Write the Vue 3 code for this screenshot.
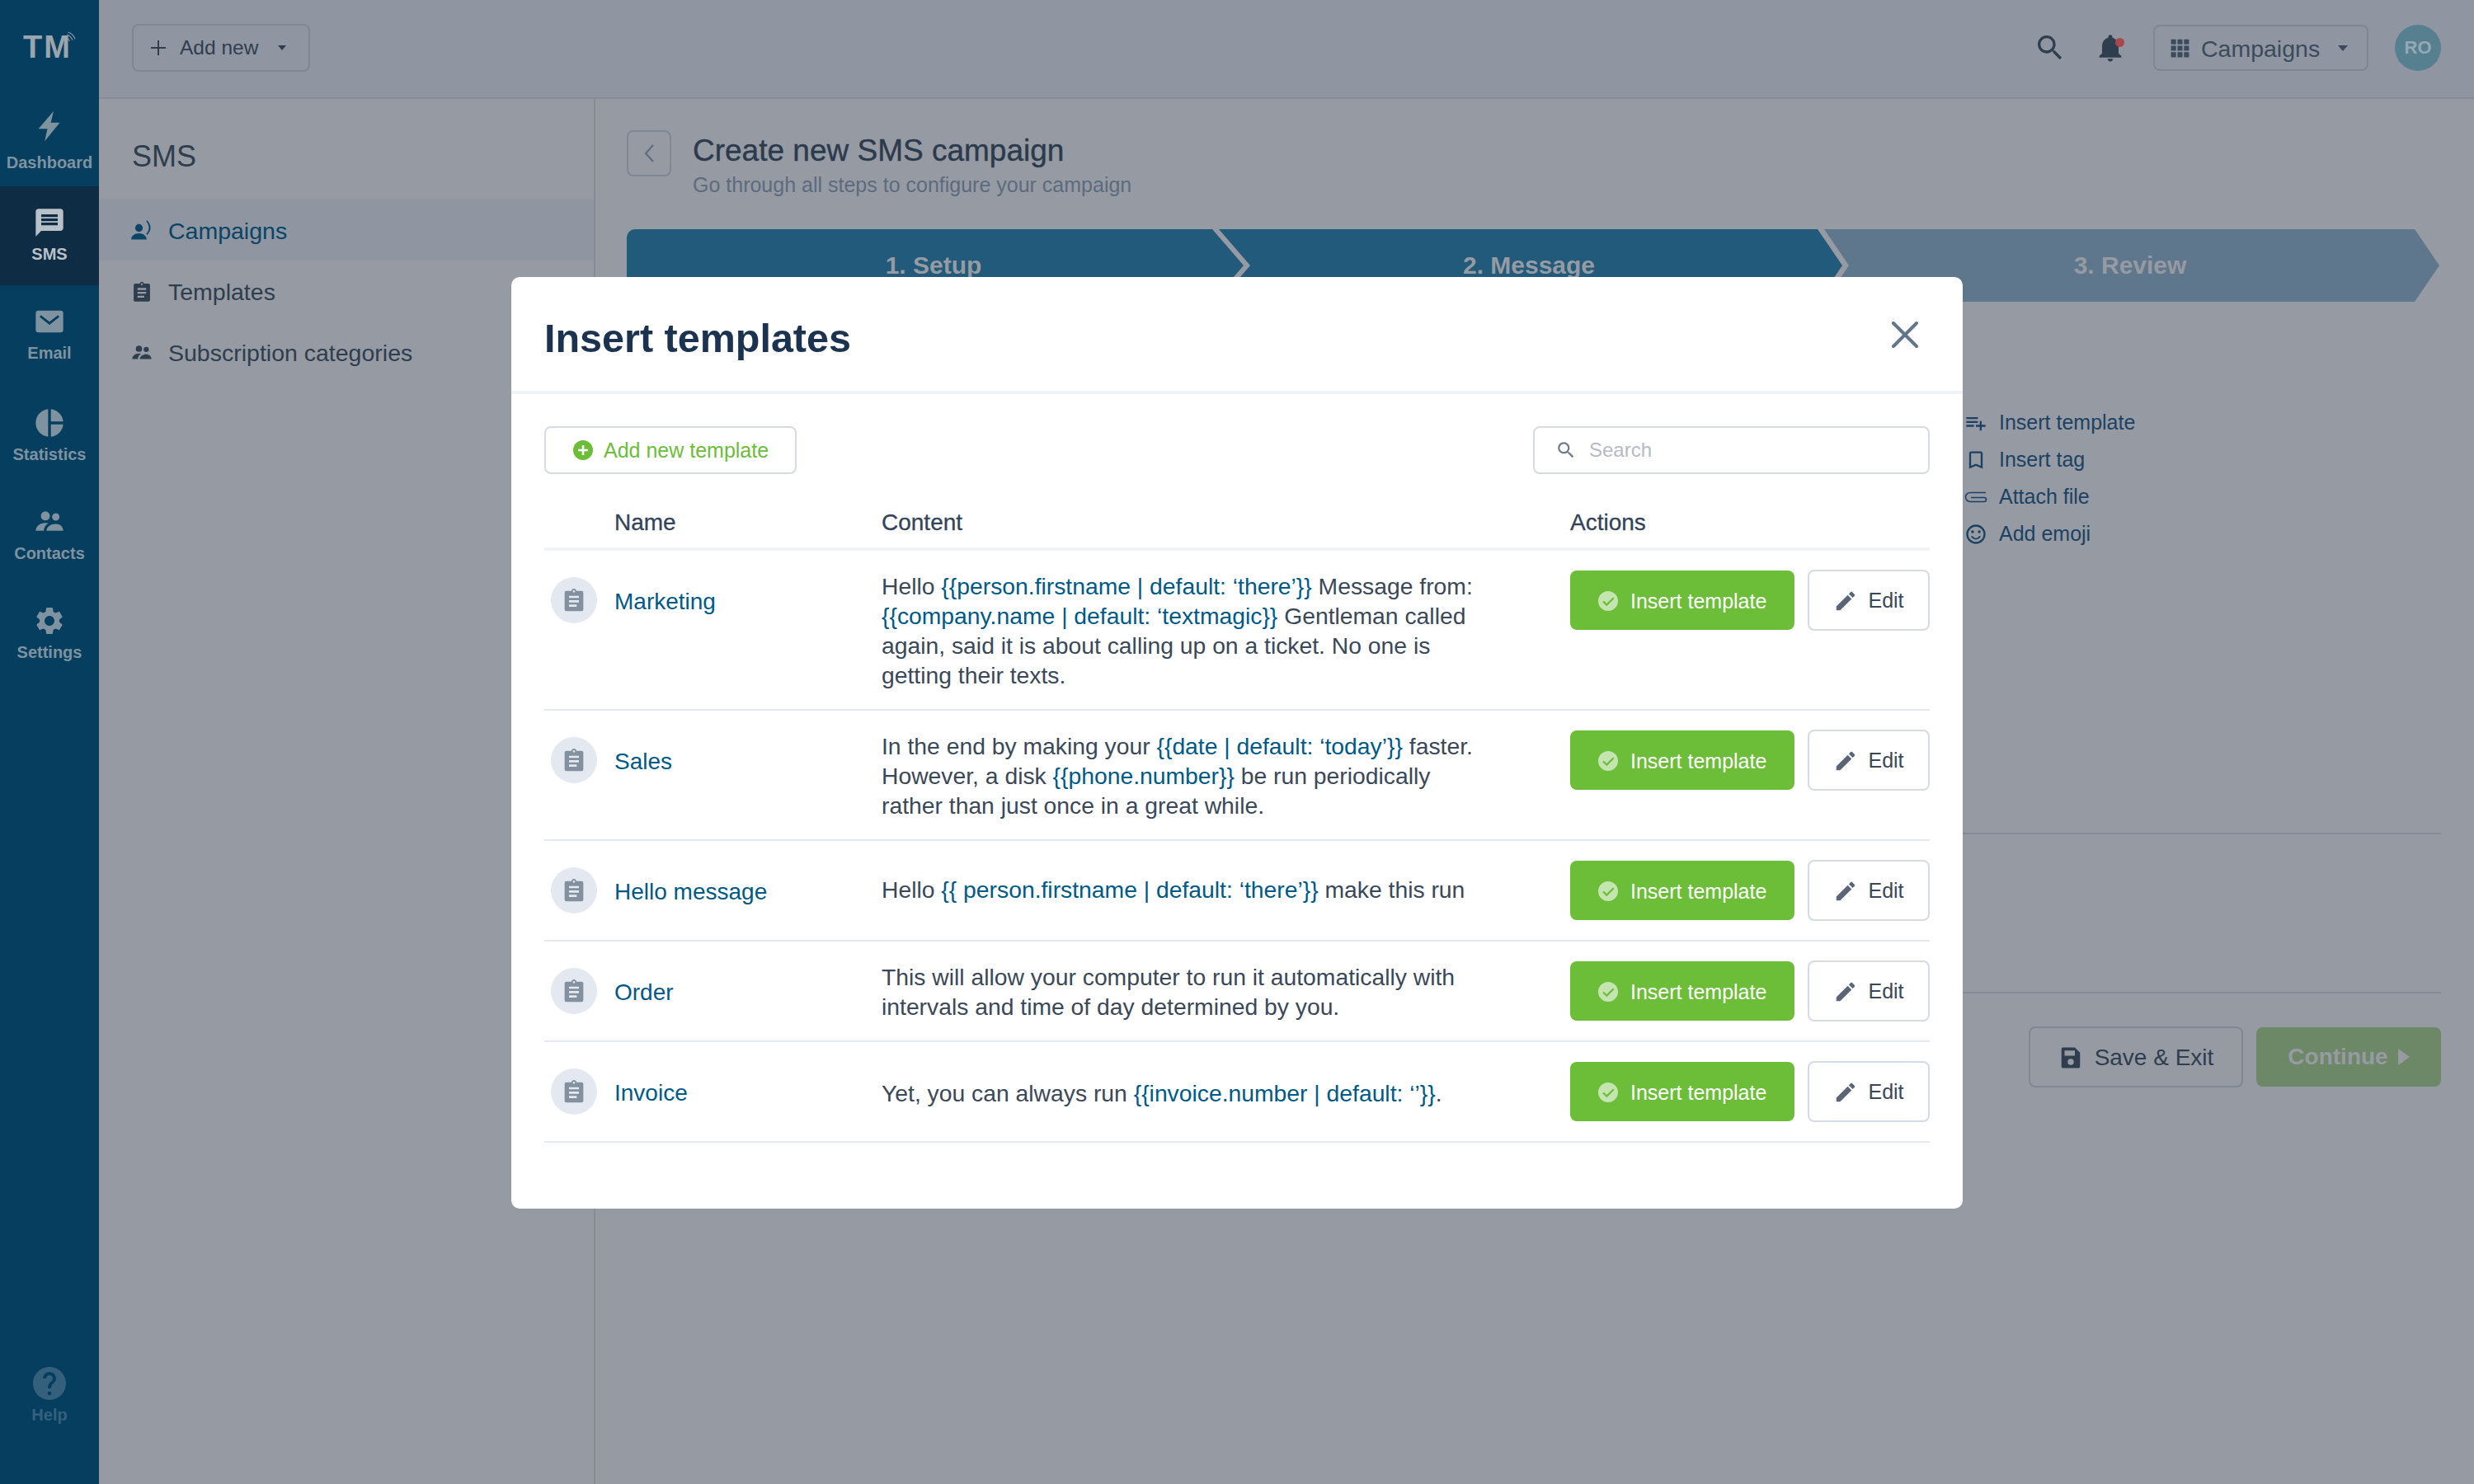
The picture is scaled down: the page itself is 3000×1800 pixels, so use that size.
<script setup>
const icons = {
  bolt: "M15 1 4 14h6.500L8.500 23l11-13.500H13z",
  sms: "M20 2H4c-1.1 0-2 .9-2 2v18l4-4h14c1.1 0 2-.9 2-2V4c0-1.1-.9-2-2-2zm-2 12H6v-2h12v2zm0-3H6V9h12v2zm0-3H6V6h12v2z",
  mail: "M4 4h16a2 2 0 0 1 2 2v12a2 2 0 0 1-2 2H4a2 2 0 0 1-2-2V6a2 2 0 0 1 2-2zm8 8.2L5.8 7.4 4.8 8.7 12 14.4l7.2-5.7-1-1.3z",
  pie: "M11 2v20c-5.07-.5-9-4.79-9-10s3.93-9.5 9-10zm2.03 0v8.99H22c-.47-4.74-4.24-8.52-8.97-8.99zm0 11.01V22c4.74-.47 8.5-4.25 8.97-8.99h-8.97z",
  people: "M9 4.4a3.3 3.3 0 1 1 0 6.6 3.3 3.3 0 0 1 0-6.6zm7.6 1.3a2.7 2.7 0 1 1 0 5.4 2.7 2.7 0 0 1 0-5.4zM2 18.5c0-3.4 3.2-5.8 7-5.8.8 0 1.5.1 2.2.3-1.9.9-3.2 2.9-3.4 5.5H2zm7.8 0c.2-3 3.2-5 6.700-5 3.200 0 5.500 2 5.500 5z",
  gear: "M19.14 12.94c.04-.3.06-.61.06-.94 0-.32-.02-.64-.07-.94l2.03-1.58c.18-.14.23-.41.12-.61l-1.92-3.32c-.12-.22-.37-.29-.59-.22l-2.39.96c-.5-.38-1.03-.7-1.62-.94l-.36-2.54c-.04-.24-.24-.41-.48-.41h-3.84c-.24 0-.43.17-.47.41l-.36 2.54c-.59.24-1.13.57-1.62.94l-2.39-.96c-.22-.08-.47 0-.59.22L2.74 8.87c-.12.21-.08.47.12.61l2.03 1.58c-.05.3-.09.63-.09.94s.02.64.07.94l-2.03 1.58c-.18.14-.23.41-.12.61l1.92 3.32c.12.22.37.29.59.22l2.39-.96c.5.38 1.03.7 1.62.94l.36 2.54c.05.24.24.41.48.41h3.84c.24 0 .44-.17.47-.41l.36-2.54c.59-.24 1.13-.56 1.62-.94l2.39.96c.22.08.47 0 .59-.22l1.92-3.32c.12-.22.07-.47-.12-.61l-2.01-1.58zM12 15.6c-1.98 0-3.6-1.62-3.6-3.6s1.62-3.6 3.6-3.6 3.6 1.62 3.6 3.6-1.62 3.6-3.6 3.6z",
  help: "M12 2C6.48 2 2 6.48 2 12s4.48 10 10 10 10-4.48 10-10S17.52 2 12 2zm1 17h-2v-2h2v2zm2.07-7.75l-.9.92C13.45 12.9 13 13.5 13 15h-2v-.5c0-1.1.45-2.1 1.17-2.83l1.24-1.26c.37-.36.59-.86.59-1.41 0-1.1-.9-2-2-2s-2 .9-2 2H8c0-2.21 1.79-4 4-4s4 1.79 4 4c0 .88-.36 1.68-.93 2.25z",
  clip: "M5 3.500h4.700C10 2.300 10.900 1.500 12 1.500s2 .8 2.300 2H19c.9 0 1.500.7 1.500 1.500v15.500c0 .9-.7 1.500-1.500 1.500H5c-.9 0-1.500-.7-1.500-1.500V5c0-.9.7-1.500 1.500-1.500zM7.500 8v2h9V8zm0 4v2h9v-2zm0 4v2h7v-2zM12 3a1 1 0 1 0 0 2 1 1 0 0 0 0-2z",
  voice: "M9 5a4 4 0 1 1 0 8 4 4 0 0 1 0-8zM1 21c0-3.800 3.500-6.500 8-6.500s8 2.700 8 6.500zM17.500 1c2.300 2.600 3.500 5 3.500 7.700 0 2.700-1.200 5-3.500 7.500l-1-.9c1.800-2.200 2.800-4.300 2.800-6.600s-1-4.400-2.800-6.800z",
  search: "M15.5 14h-.79l-.28-.27C15.41 12.59 16 11.11 16 9.5 16 5.91 13.09 3 9.5 3S3 5.91 3 9.5 5.91 16 9.5 16c1.61 0 3.09-.59 4.23-1.57l.27.28v.79l5 4.99L20.49 19l-4.99-5zm-6 0C7.01 14 5 11.99 5 9.5S7.01 5 9.5 5 14 7.01 14 9.5 11.99 14 9.5 14z",
  bell: "M12 22c1.1 0 2-.9 2-2h-4c0 1.1.9 2 2 2zm6-6v-5c0-3.07-1.63-5.64-4.5-6.32V4c0-.83-.67-1.5-1.5-1.5s-1.5.67-1.5 1.5v.68C7.64 5.360 6 7.920 6 11v5l-2 2v1h16v-1l-2-2z",
  grid: "M3 3h5v5H3zm6.500 0h5v5h-5zM16 3h5v5h-5zM3 9.500h5v5H3zm6.500 0h5v5h-5zm6.500 0h5v5h-5zM3 16h5v5H3zm6.500 0h5v5h-5zm6.500 0h5v5h-5z",
  pencil: "M3 17.25V21h3.75L17.81 9.940l-3.750-3.750L3 17.250zM20.710 7.040c.39-.39.39-1.020 0-1.410l-2.340-2.340c-.39-.39-1.020-.39-1.410 0l-1.830 1.830 3.750 3.750 1.830-1.830z",
  floppy: "M4.500 2H16l5 5v13.500c0 .8-.7 1.500-1.500 1.500h-15C3.700 22 3 21.300 3 20.500v-17C3 2.700 3.700 2 4.500 2zM6 5v5h10V5zm6 8a3 3 0 1 0 0 6 3 3 0 0 0 0-6z",
  listAdd: "M14 10H2v2h12v-2zm0-4H2v2h12V6zm4 8v-4h-2v4h-4v2h4v4h2v-4h4v-2h-4zM2 16h8v-2H2v2z",
  bookmark: "M17 3H7c-1.100 0-1.990.9-1.990 2L5 21l7-3 7 3V5c0-1.100-.9-2-2-2zm0 15l-5-2.180L7 18V5h10v13z",
  smile: "M12 2a10 10 0 1 1 0 20 10 10 0 0 1 0-20zm0 2a8 8 0 1 0 0 16 8 8 0 0 0 0-16zM8.500 8a1.500 1.500 0 1 1 0 3 1.500 1.500 0 0 1 0-3zm7 0a1.500 1.500 0 1 1 0 3 1.500 1.500 0 0 1 0-3zM12 17.500c-2.300 0-4.300-1.400-5.100-3.500h1.800c.7 1.200 1.900 2 3.300 2s2.600-.8 3.300-2h1.800c-.8 2.100-2.800 3.500-5.100 3.500z",
}

const navItems = [
  { label: "Dashboard", icon: "bolt", first: true },
  { label: "SMS", icon: "sms", active: true },
  { label: "Email", icon: "mail" },
  { label: "Statistics", icon: "pie", spaced: true },
  { label: "Contacts", icon: "people" },
  { label: "Settings", icon: "gear" },
]

const subItems = [
  { label: "Campaigns", icon: "voice", active: true },
  { label: "Templates", icon: "clip" },
  { label: "Subscription categories", icon: "people" },
]

const tools = [
  { label: "Insert template", icon: "listAdd" },
  { label: "Insert tag", icon: "bookmark" },
  { label: "Attach file", icon: "attach" },
  { label: "Add emoji", icon: "smile" },
]

// t = plain text, v = highlighted merge tag
const templates = [
  {
    name: "Marketing",
    parts: [
      { t: "Hello " }, { v: "{{person.firstname | default: ‘there’}}" }, { t: " Message from: " },
      { v: "{{company.name | default: ‘textmagic}}" },
      { t: " Gentleman called again, said it is about calling up on a ticket. No one is getting their texts." },
    ],
  },
  {
    name: "Sales",
    parts: [
      { t: "In the end by making your " }, { v: "{{date | default: ‘today’}}" }, { t: " faster. However, a disk " },
      { v: "{{phone.number}}" }, { t: " be run periodically rather than just once in a great while." },
    ],
  },
  {
    name: "Hello message",
    single: "up",
    parts: [{ t: "Hello " }, { v: "{{ person.firstname | default: ‘there’}}" }, { t: " make this run" }],
  },
  {
    name: "Order",
    parts: [{ t: "This will allow your computer to run it automatically with intervals and time of day determined by you." }],
  },
  {
    name: "Invoice",
    single: "down",
    parts: [{ t: "Yet, you can always run " }, { v: "{{invoice.number | default: ‘’}}" }, { t: "." }],
  },
]
</script>

<template>
  <div class="app">
    <aside class="rail">
      <div class="logo">
        <span>TM</span>
        <svg viewBox="0 0 18 18" width="16" height="16" fill="none" stroke="currentColor" stroke-width="1.200">
          <path d="M4.700 8.500A8 8 0 0 1 9.500 13.300M6.100 4.700A12 12 0 0 1 13.300 11.900M7.500 1A16 16 0 0 1 17 10.500" />
        </svg>
      </div>
      <a v-for="item in navItems" :key="item.label" class="rail-item" :class="{ active: item.active, first: item.first, spaced: item.spaced }">
        <svg viewBox="0 0 24 24" width="40" height="40"><path :d="icons[item.icon]" fill="currentColor" fill-rule="evenodd" /></svg>
        <span>{{ item.label }}</span>
      </a>
      <a class="rail-item help">
        <svg viewBox="0 0 24 24" width="48" height="48"><path :d="icons.help" fill="currentColor" /></svg>
        <span>Help</span>
      </a>
    </aside>

    <div class="page">
      <header class="topbar">
        <button class="btn-outline add-new">
          <svg viewBox="0 0 18 18" width="18" height="18"><path d="M8 0h2v8h8v2h-8v8H8v-8H0V8h8z" fill="currentColor" /></svg>
          <span>Add new</span>
          <i class="caret small"></i>
        </button>
        <div class="top-right">
          <svg class="top-search" viewBox="0 0 24 24" width="40" height="40"><path :d="icons.search" fill="currentColor" /></svg>
          <div class="bell">
            <svg viewBox="0 0 24 24" width="40" height="40"><path :d="icons.bell" fill="currentColor" /></svg>
            <i class="dot"></i>
          </div>
          <button class="btn-outline switcher">
            <svg viewBox="0 0 24 24" width="29" height="29"><path :d="icons.grid" fill="currentColor" /></svg>
            <span>Campaigns</span>
            <i class="caret"></i>
          </button>
          <div class="avatar">RO</div>
        </div>
      </header>

      <div class="body">
        <nav class="subnav">
          <h2>SMS</h2>
          <a v-for="item in subItems" :key="item.label" class="sub-item" :class="{ active: item.active }">
            <svg viewBox="0 0 24 24" width="28" height="28"><path :d="icons[item.icon]" fill="currentColor" fill-rule="evenodd" /></svg>
            <span>{{ item.label }}</span>
          </a>
        </nav>

        <main class="main">
          <div class="head">
            <button class="back">
              <svg viewBox="0 0 14 24" width="14" height="24" fill="none" stroke="currentColor" stroke-width="2"><path d="M12 2 3 12l9 10" /></svg>
            </button>
            <div class="head-text">
              <h1>Create new SMS campaign</h1>
              <p>Go through all steps to configure your campaign</p>
            </div>
          </div>

          <div class="steps">
            <div class="step one">1. Setup</div>
            <div class="step two">2. Message</div>
            <div class="step three">3. Review</div>
          </div>

          <div class="composer">
            <ul class="tools">
              <li v-for="tool in tools" :key="tool.label">
                <svg v-if="tool.icon === 'attach'" viewBox="0 0 28 14" width="28" height="14" fill="none" stroke="currentColor" stroke-width="1.500">
                  <path d="M26 1.500H7a5.500 5.500 0 0 0 0 11h17a2.500 2.500 0 0 0 0-5H8" />
                </svg>
                <svg v-else viewBox="0 0 24 24" width="28" height="28"><path :d="icons[tool.icon]" fill="currentColor" fill-rule="evenodd" /></svg>
                <span>{{ tool.label }}</span>
              </li>
            </ul>
          </div>
          <div class="sender"></div>
          <div class="footer-actions">
            <button class="btn-outline save">
              <svg viewBox="0 0 24 24" width="30" height="30"><path :d="icons.floppy" fill="currentColor" fill-rule="evenodd" /></svg>
              <span>Save &amp; Exit</span>
            </button>
            <button class="continue">
              <span>Continue</span>
              <svg viewBox="0 0 14 20" width="14" height="20"><path d="M0 0l14 10L0 20z" fill="currentColor" /></svg>
            </button>
          </div>
        </main>
      </div>
    </div>

    <div class="scrim">
      <section class="modal">
        <header class="modal-head">
          <h2>Insert templates</h2>
          <svg viewBox="0 0 32 32" width="32" height="32" fill="none" stroke="currentColor" stroke-width="4" stroke-linecap="round"><path d="M2 2l28 28M30 2 2 30" /></svg>
        </header>

        <div class="modal-body">
          <div class="toolbar">
            <button class="add-template">
              <svg viewBox="0 0 24 24" width="24" height="24"><path d="M12 0a12 12 0 1 1 0 24 12 12 0 0 1 0-24zm-1.300 6v4.700H6v2.600h4.700V18h2.600v-4.700H18v-2.600h-4.700V6z" fill="currentColor" fill-rule="evenodd" /></svg>
              <span>Add new template</span>
            </button>
            <label class="search">
              <svg viewBox="0 0 24 24" width="26" height="26"><path :d="icons.search" fill="currentColor" /></svg>
              <input type="text" placeholder="Search" />
            </label>
          </div>

          <div class="row head-row">
            <span class="c-name">Name</span>
            <span>Content</span>
            <span>Actions</span>
          </div>

          <div v-for="tpl in templates" :key="tpl.name" class="row">
            <div class="name">
              <span class="doc">
                <svg viewBox="0 0 24 24" width="32" height="32"><path :d="icons.clip" fill="currentColor" fill-rule="evenodd" /></svg>
              </span>
              <a>{{ tpl.name }}</a>
            </div>
            <p class="content" :class="tpl.single">
              <template v-for="(part, i) in tpl.parts" :key="i"><span v-if="part.v" class="tag">{{ part.v }}</span><template v-else>{{ part.t }}</template></template>
            </p>
            <div class="actions">
              <button class="insert">
                <svg viewBox="0 0 24 24" width="24" height="24"><path d="M12 0a12 12 0 1 1 0 24 12 12 0 0 1 0-24zm6 7.500-7.700 7.600L6.800 11.700 5.300 13.200l5 5 9.200-9.200z" fill="#fff" fill-opacity=".6" fill-rule="evenodd" /></svg>
                <span>Insert template</span>
              </button>
              <button class="edit">
                <svg viewBox="0 0 24 24" width="30" height="30"><path :d="icons.pencil" fill="currentColor" /></svg>
                <span>Edit</span>
              </button>
            </div>
          </div>
        </div>
      </section>
    </div>
  </div>
</template>

<style scoped>
* { box-sizing: border-box; }
button { font-family: inherit; cursor: pointer; }

.app {
  position: relative;
  display: flex;
  width: 3000px;
  height: 1800px;
  overflow: hidden;
  background: #969aa2;
  color: #2f3e4e;
  font-family: "Liberation Sans", Arial, sans-serif;
}

/* left rail */
.rail { display: flex; flex-direction: column; width: 120px; background: #053e5f; color: #7f929f; }
.logo { position: relative; display: flex; justify-content: center; align-items: center; height: 115px; color: #9aa5ae; font-size: 38px; font-weight: 700; letter-spacing: 2px; }
.logo span { margin-right: 5px; }
.logo svg { position: absolute; left: 76px; top: 38px; }
.rail-item { display: flex; flex-direction: column; align-items: center; justify-content: flex-end; height: 120px; padding-bottom: 24px; gap: 4px; font-size: 20px; line-height: 28px; font-weight: 700; }
.rail-item.first { height: 111px; padding-bottom: 15px; gap: 10px; }
.rail-item.active { background: #0f2c45; color: #b9c1c8; }
.rail-item.spaced { margin-top: 3px; }
.rail-item.help { height: auto; margin-top: auto; padding-bottom: 70px; gap: 0; color: #35607b; }

/* top bar */
.page { display: flex; flex-direction: column; flex: 1; min-width: 0; }
.topbar { display: flex; align-items: center; justify-content: space-between; flex: none; height: 120px; padding: 0 40px 2px; background: #8f96a1; border-bottom: 2px solid #858b96; }
.btn-outline { display: flex; align-items: center; border: 2px solid #7f8793; border-radius: 8px; background: transparent; color: #2f3e4e; }
.add-new { width: 216px; height: 58px; padding: 0 0 0 21px; font-size: 24.500px; }
.add-new span { margin-left: 17px; }
.caret { width: 0; height: 0; margin-left: 22px; border: 6px solid transparent; border-top: 7px solid currentColor; border-bottom: 0; }
.caret.small { margin-left: 24px; border-width: 5px; border-top-width: 6px; border-bottom-width: 0; }
.top-right { display: flex; align-items: center; }
.top-search { margin-right: 33px; }
.bell { position: relative; display: flex; margin-right: 32px; }
.dot { position: absolute; right: 3px; top: 8px; width: 11px; height: 11px; border-radius: 50%; background: #a8474c; }
.switcher { height: 56px; width: 261px; padding: 0 0 0 16px; font-size: 28.500px; color: #3b4b5c; }
.switcher span { margin-left: 11px; padding-top: 3px; }
.avatar { display: flex; align-items: center; justify-content: center; width: 56px; height: 56px; margin-left: 32px; border-radius: 50%; background: #567f90; color: #93a9b5; font-size: 22px; font-weight: 700; }

/* sub navigation */
.body { display: flex; flex: 1; min-height: 0; }
.subnav { flex: none; width: 602px; border-right: 2px solid #858b96; }
.subnav h2 { margin: 0 0 30px; padding: 48px 0 0 40px; font-size: 36px; line-height: 44px; font-weight: 400; }
.sub-item { display: flex; align-items: center; gap: 18px; height: 74px; padding: 2px 0 0 38px; font-size: 28.500px; color: #2f3e4e; }
.sub-item.active { background: #8f96a1; color: #0a4566; }

/* wizard */
.main { flex: 1; min-width: 0; padding: 38px 40px 0 38px; }
.head { display: flex; gap: 26px; }
.head-text { padding-top: 2px; }
.back { display: flex; align-items: center; justify-content: center; flex: none; width: 54px; height: 56px; border: 2px solid #7f8793; border-radius: 8px; background: transparent; color: #5d6b7e; }
.head h1 { margin: 0; font-size: 37px; line-height: 46px; font-weight: 400; color: #2b3b4d; -webkit-text-stroke: .4px #2b3b4d; }
.head p { margin: 1px 0 0; font-size: 25px; line-height: 34px; color: #5d6b7e; }
.steps { display: flex; width: 2198px; height: 88px; margin-top: 37px; overflow: hidden; border-radius: 10px 0 0 0; }
.step { display: flex; align-items: center; justify-content: center; height: 88px; padding-right: 4px; font-size: 30px; font-weight: 700; color: #969aa2; }
.step.one { flex: none; width: 748px; background: #215a7a; clip-path: polygon(0 0, 710px 0, 100% 50%, 710px 100%, 0 100%); }
.step.two { flex: none; width: 756px; margin-left: -30px; background: #215a7a; clip-path: polygon(0 0, 726px 0, 100% 50%, 726px 100%, 0 100%, 38px 50%); }
.step.three { flex: 1; margin-left: -22px; background: #5f778d; clip-path: polygon(0 0, calc(100% - 30px) 0, 100% 50%, calc(100% - 30px) 100%, 0 100%, 30px 50%); }
.composer { height: 646px; border-bottom: 2px solid #858b96; }
.tools { display: flex; flex-direction: column; width: 578px; margin: 0 0 0 auto; padding: 124px 0 0; list-style: none; }
.tools li { display: flex; align-items: center; height: 45px; font-size: 25px; color: #1c4263; }
.tools svg { flex: none; width: 28px; }
.tools span { margin-left: 14px; }
.sender { height: 193px; border-bottom: 2px solid #858b96; }
.footer-actions { display: flex; justify-content: flex-end; gap: 16px; margin-top: 40px; }
.save { justify-content: center; gap: 14px; width: 260px; height: 74px; padding-top: 2px; font-size: 28px; }
.continue { display: flex; align-items: center; justify-content: center; gap: 12px; width: 224px; height: 72px; margin-top: 1px; border: 0; border-radius: 8px; background: #6d8867; color: #969aa2; font-size: 28px; font-weight: 700; }

/* modal */
.scrim { position: absolute; inset: 0; display: flex; align-items: center; justify-content: center; }
.modal { width: 1760px; margin-top: 2px; border-radius: 10px; background: #fff; }
.modal-head { display: flex; align-items: center; justify-content: space-between; height: 142px; padding: 0 54px 0 40px; border-bottom: 4px solid #f0f2f5; color: #62758a; }
.modal-head h2 { margin: 10px 0 0; font-size: 48.500px; font-weight: 700; color: #1b3351; }
.modal-head svg { margin-top: 2px; }
.modal-body { padding: 39px 40px 80px; }
.toolbar { display: flex; justify-content: space-between; }
.add-template { display: flex; align-items: center; gap: 13px; width: 306px; height: 58px; padding: 0 0 0 33px; border: 2px solid #d5dae4; border-radius: 8px; background: #fff; color: #6cbd38; font-size: 25px; }
.search { display: flex; align-items: center; gap: 15px; width: 481px; height: 58px; padding-left: 25px; border: 2px solid #d5dae4; border-radius: 8px; color: #6b7a8c; }
.search input { flex: 1; min-width: 0; border: 0; outline: 0; padding: 0; font: 24px "Liberation Sans", Arial, sans-serif; }
.search input::placeholder { color: #b4bbc5; }
.row { display: grid; grid-template-columns: 409px 835px 436px; padding: 24px 0; border-bottom: 2px solid #e6e9f1; font-size: 28.300px; line-height: 36px; color: #3a4859; }
.head-row { padding: 41px 0 12px; border-bottom: 4px solid #f1f3f6; color: #33435a; font-size: 28px; -webkit-text-stroke: .3px #33435a; }
.c-name { padding-left: 85px; }
.name { display: flex; align-items: center; align-self: start; gap: 21px; height: 56px; margin-top: 8px; padding-left: 8px; font-size: 28px; }
.name a { color: #005a87; margin-top: 4px; }
.doc { display: flex; align-items: center; justify-content: center; flex: none; width: 56px; height: 56px; border-radius: 50%; background: #e4e8f1; color: #83909f; }
.content { max-width: 730px; margin: 1px 0 -1px; }
.content.up { margin-top: 17px; }
.content.down { margin-top: 20px; }
.tag { color: #005a87; }
.actions { display: flex; align-items: center; gap: 16px; align-self: start; height: 72px; }
.insert { display: flex; align-items: center; gap: 15px; flex: none; width: 272px; height: 72px; padding: 2px 0 0 34px; border: 0; border-radius: 8px; background: #6cbd38; color: #fff; font-size: 25px; }
.edit { display: flex; align-items: center; justify-content: center; gap: 12px; flex: none; width: 148px; height: 74px; padding-top: 2px; border: 2px solid #d5dae4; border-radius: 8px; background: #fff; color: #3a4859; font-size: 25px; }
.edit svg { color: #5a6675; }
</style>

<style>
html, body { margin: 0; background: #969aa2; }
</style>
